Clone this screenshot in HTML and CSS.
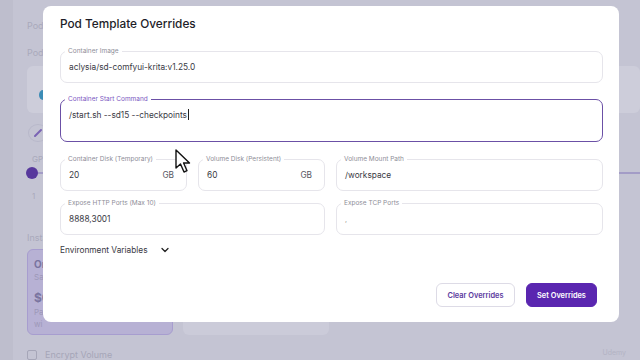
FILE: index.html
```html
<!DOCTYPE html>
<html>
<head>
	<meta charset="utf-8" />
	<title>Pod Template Overrides</title>
	<link rel="stylesheet" href="styles.css">
</head>
<body>
	<div class="page">
		<div class="rail"></div>
		<div class="content">
			<div class="faint">Pod</div>
			<div class="faint gap">Pod</div>
			<div class="bg-card"><span class="blue-dot"></span></div>
			<div class="edit-btn">
				<svg width="10" height="10" viewBox="0 0 10 10"><path d="M2 8 L8 2" stroke="#7a63b4" stroke-width="2" stroke-linecap="round"/></svg>
			</div>
			<div class="faint small">GPU</div>
			<div class="slider"><span class="knob"></span><span class="track"></span></div>
			<div class="faint small">1</div>
			<div class="faint inst">Insta</div>
			<div class="plans">
				<div class="plan selected">
					<b>On</b>
					<span>Sa</span>
					<b class="price">$0</b>
					<span>Pa</span>
					<span>wi</span>
				</div>
				<div class="plan"></div>
			</div>
			<label class="encrypt"><span class="box"></span>Encrypt Volume</label>
		</div>
	</div>

	<div class="modal">
		<h2 class="modal-title">Pod Template Overrides</h2>

		<div class="form">
			<div class="field">
				<span class="field-label">Container Image</span>
				aclysia/sd-comfyui-krita:v1.25.0
			</div>

			<div class="field active">
				<span class="field-label">Container Start Command</span>
				/start.sh --sd15 --checkpoints<span class="caret"></span>
			</div>

			<div class="row row-3">
				<div class="field">
					<span class="field-label">Container Disk (Temporary)</span>
					20<span class="unit">GB</span>
				</div>
				<div class="field">
					<span class="field-label">Volume Disk (Persistent)</span>
					60<span class="unit">GB</span>
				</div>
				<div class="field">
					<span class="field-label">Volume Mount Path</span>
					/workspace
				</div>
			</div>

			<div class="row row-2">
				<div class="field">
					<span class="field-label">Expose HTTP Ports (Max 10)</span>
					8888,3001
				</div>
				<div class="field">
					<span class="field-label">Expose TCP Ports</span>
					<span class="muted">,</span>
				</div>
			</div>
		</div>

		<div class="env">
			Environment Variables
			<svg class="chevron" width="8" height="6" viewBox="0 0 8 6"><path d="M1 1.5 L4 4.5 L7 1.5" fill="none" stroke="#222" stroke-width="1.3" stroke-linecap="round" stroke-linejoin="round"/></svg>
		</div>

		<div class="actions">
			<button class="btn btn-outline">Clear Overrides</button>
			<button class="btn btn-primary">Set Overrides</button>
		</div>
	</div>

	<svg class="cursor" width="18" height="27" viewBox="0 0 18 27">
		<path d="M1 1 L1 19 L5.5 15 L9 23 L12 21.7 L8.6 14 L14.5 14 Z" fill="#fff" stroke="#111" stroke-width="1.4" stroke-linejoin="round"/>
	</svg>

	<div class="watermark">Udemy</div>
</body>
</html>
```

FILE: styles.css
```css
html, body {
	margin: 0;
	padding: 0;
}

body {
	width: 640px;
	height: 360px;
	overflow: hidden;
	position: relative;
	background: #c4c4d3;
	font-family: Inter, "Noto Sans", sans-serif;
}

/* dimmed page behind the dialog */
.page {
	display: flex;
	height: 360px;
}

.rail {
	width: 13px;
	background: #bebecd;
}

.content {
	flex: 1;
	padding: 20px 0 0 14px;
	display: flex;
	flex-direction: column;
}

.faint {
	font-size: 9px;
	line-height: 11px;
	color: #a9a9bb;
}

.faint.gap {
	margin-top: 16px;
}

.bg-card {
	margin-top: 8px;
	height: 53px;
	background: #cdcdda;
	border-radius: 6px;
	position: relative;
}

.blue-dot {
	position: absolute;
	left: 12px;
	top: 24px;
	width: 8px;
	height: 10px;
	border-radius: 50%;
	background: #3c8cb6;
}

.edit-btn {
	margin-top: 11px;
	width: 18px;
	height: 18px;
	border-radius: 50%;
	border: 1px solid #b8b8ca;
	display: flex;
	align-items: center;
	justify-content: center;
	margin-left: 1px;
}

.faint.small {
	margin-top: 12px;
	padding-left: 5px;
	font-size: 8px;
}

.slider {
	margin-top: 2px;
	height: 12px;
	display: flex;
	align-items: center;
	position: relative;
}

.knob {
	width: 12px;
	height: 12px;
	border-radius: 50%;
	background: #57389c;
	margin-left: -1px;
}

.track {
	flex: 1;
	height: 2px;
	background: #a39cc6;
}

.faint.inst {
	margin-top: 30px;
}

.plans {
	margin-top: 6px;
	display: flex;
	gap: 10px;
}

.plan {
	width: 146px;
	height: 86px;
	box-sizing: border-box;
	border-radius: 6px;
	background: #cbcbd9;
	padding: 8px 6px;
	display: flex;
	flex-direction: column;
	font-size: 8px;
	color: #9d98b8;
}

.plan.selected {
	background: #b7b1d4;
	border: 1px solid #a79dcf;
}

.plan b {
	color: #7a74a0;
	font-size: 10px;
}

.plan .price {
	margin-top: 8px;
	font-size: 12px;
}

.plan span {
	margin-top: 2px;
}

.encrypt {
	margin-top: 14px;
	display: flex;
	align-items: center;
	gap: 8px;
	font-size: 9px;
	color: #a6a6b8;
}

.encrypt .box {
	width: 8px;
	height: 8px;
	border: 1px solid #a6a6b8;
	border-radius: 2px;
}

/* dialog */
.modal {
	position: absolute;
	left: 43px;
	top: 6px;
	width: 576px;
	height: 316px;
	box-sizing: border-box;
	background: #fff;
	border-radius: 8px;
	padding: 10px 16px 15px 17px;
	display: flex;
	flex-direction: column;
}

.modal-title {
	margin: 0;
	font-size: 11.8px;
	line-height: 16px;
	font-weight: 500;
	color: #1d1d28;
}

.form {
	margin-top: 19px;
	display: flex;
	flex-direction: column;
}

.field {
	position: relative;
	height: 32px;
	box-sizing: border-box;
	border: 1px solid #e6e5eb;
	border-radius: 7px;
	padding: 0 12px 0 8px;
	display: flex;
	align-items: center;
	font-size: 8.3px;
	color: #3a3a44;
}

.field-label {
	position: absolute;
	top: -5px;
	left: 4px;
	padding: 0 3px;
	background: #fff;
	font-size: 6.5px;
	line-height: 9px;
	color: #8e8e98;
}

.field.active {
	margin-top: 16px;
	height: 43px;
	border: 1.5px solid #6b50a6;
	align-items: flex-start;
	padding-top: 9px;
	line-height: 12px;
}

.field.active .field-label {
	top: -5.5px;
	color: #7b58c2;
}

.caret {
	display: inline-block;
	width: 1px;
	height: 11px;
	background: #222;
	margin-left: 1px;
}

.unit {
	margin-left: auto;
	color: #55555f;
}

.muted {
	color: #999;
	font-size: 7px;
}

.row {
	display: grid;
	column-gap: 11px;
}

.row-3 {
	margin-top: 17px;
	grid-template-columns: 127px 127px 1fr;
}

.row-2 {
	margin-top: 12px;
	grid-template-columns: 265px 1fr;
}

.env {
	margin-top: 8px;
	display: flex;
	align-items: center;
	font-size: 8.3px;
	line-height: 14px;
	color: #3a3a44;
}

.chevron {
	margin-left: 13px;
}

.actions {
	margin-top: auto;
	padding-right: 6px;
	display: flex;
	justify-content: flex-end;
	gap: 11px;
}

.btn {
	height: 24px;
	border-radius: 6px;
	font-family: inherit;
	font-size: 7.4px;
	font-weight: 600;
	padding: 0;
	cursor: pointer;
}

.btn-outline {
	width: 79px;
	background: #fff;
	border: 1px solid #dddbe6;
	color: #5b3a9e;
}

.btn-primary {
	width: 71px;
	background: #5a26b0;
	border: 1px solid #5a26b0;
	color: #fff;
}

.cursor {
	position: absolute;
	left: 175px;
	top: 149px;
}

.watermark {
	position: absolute;
	right: 14px;
	bottom: 3px;
	font-size: 7px;
	color: #b3b3c3;
}
```
